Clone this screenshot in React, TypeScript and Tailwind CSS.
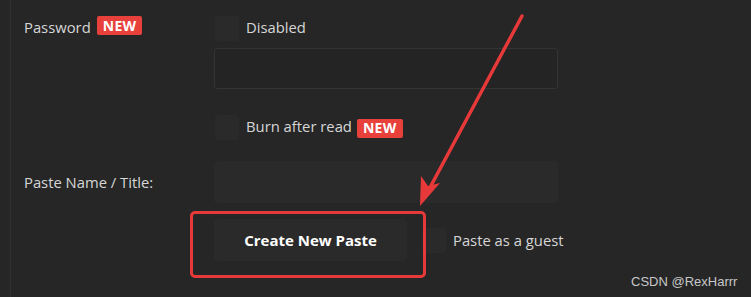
import React from 'react';

const NewBadge = () => (
  <span className="inline-flex items-center h-[19px] px-[6px] rounded-[2px] bg-[#e8413c] text-white text-[14px] font-bold leading-none tracking-[0.3px]">
    NEW
  </span>
);

const Checkbox = () => <span className="block w-[24px] h-[25px] rounded-[3px] bg-[#2a2a2a]" />;

export default function App() {
  return (
    <div className="relative w-[751px] h-[297px] overflow-hidden bg-[#262626] font-['Open_Sans','Noto_Sans',sans-serif] text-[14.8px] text-[#d6d6d6]">
      <div className="absolute left-[10px] top-0 bottom-0 w-px bg-[#303030]" />

      <div className="pl-[24px] pt-[16px] flex flex-col">
        {/* Password */}
        <div className="flex">
          <div className="w-[190px] h-[25px] flex items-start gap-[6px]">
            <span className="leading-[22px]">Password</span>
            <NewBadge />
          </div>
          <div className="flex flex-col">
            <label className="flex items-center gap-[7px] h-[25px] ml-[1px]">
              <Checkbox />
              <span className="-mt-[2px]">Disabled</span>
            </label>
            <div className="mt-[7px] w-[344px] h-[41px] rounded-[3px] border border-[#333333] bg-[#242424]" />
            <label className="mt-[26px] flex items-center gap-[7px] h-[25px] ml-[1px]">
              <Checkbox />
              <span className="-mt-[2px]">Burn after read</span>
              <span className="-ml-[2px]">
                <NewBadge />
              </span>
            </label>
          </div>
        </div>

        {/* Title */}
        <div className="flex items-center mt-[21px]">
          <div className="w-[190px]">Paste Name / Title:</div>
          <div className="w-[344px] h-[42px] rounded-[3px] bg-[#2a2a2a]" />
        </div>

        {/* Submit */}
        <div className="flex items-center mt-[16px] ml-[190px]">
          <button className="w-[193px] h-[42px] rounded-[3px] bg-[#2a2a2a] text-white text-[15px] font-bold">
            Create New Paste
          </button>
          <label className="ml-[15px] flex items-center gap-[7px]">
            <Checkbox />
            <span>Paste as a guest</span>
          </label>
        </div>
      </div>

      {/* annotation */}
      <div className="absolute left-[190px] top-[211px] w-[236px] h-[67px] rounded-[5px] border-[3px] border-[#e8393a]" />
      <svg className="absolute left-0 top-0" width="751" height="297" viewBox="0 0 751 297">
        <line x1="522" y1="16" x2="426" y2="195" stroke="#e8393a" strokeWidth="3.5" strokeLinecap="round" />
        <path d="M420 206 L421 176 L428 186 L440 183 Z" fill="#e8393a" />
      </svg>

      <div className="absolute left-[631px] top-[272px] text-[13px] text-[#c8c8c8] font-['Liberation_Sans',sans-serif]">
        CSDN @RexHarrr
      </div>
    </div>
  );
}
